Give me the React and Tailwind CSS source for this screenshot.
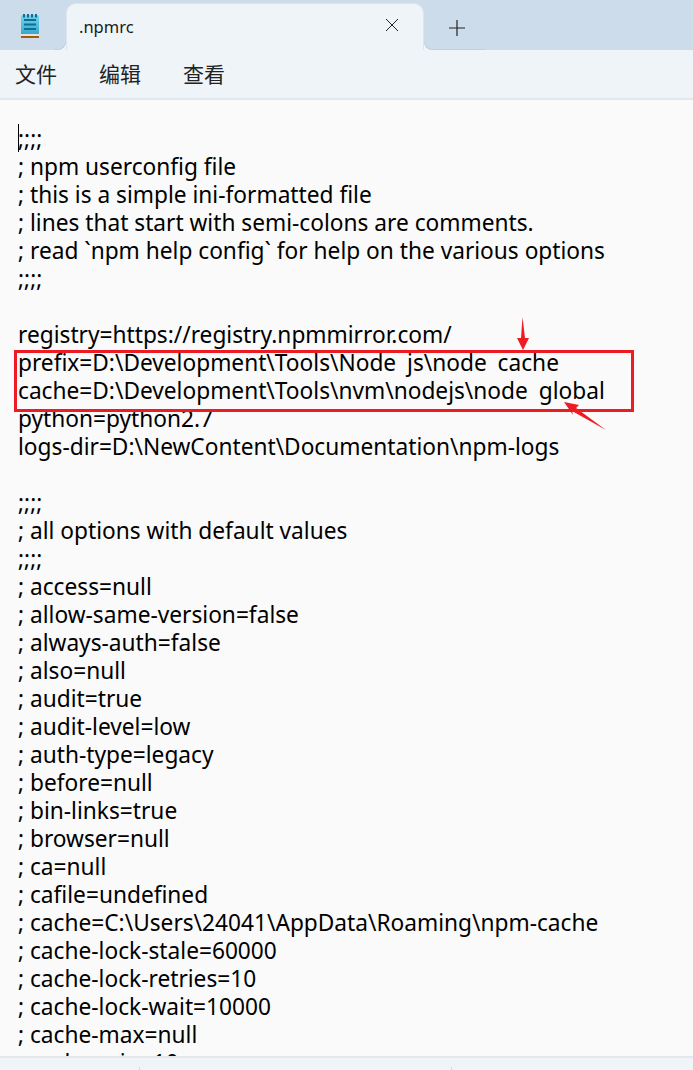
const LINES = [
  ";;;;",
  "; npm userconfig file",
  "; this is a simple ini-formatted file",
  "; lines that start with semi-colons are comments.",
  "; read `npm help config` for help on the various options",
  ";;;;",
  "",
  "registry=https://registry.npmmirror.com/",
  "prefix=D:\\Development\\Tools\\Node js\\node cache",
  "cache=D:\\Development\\Tools\\nvm\\nodejs\\node global",
  "python=python2.7",
  "logs-dir=D:\\NewContent\\Documentation\\npm-logs",
  "",
  ";;;;",
  "; all options with default values",
  ";;;;",
  "; access=null",
  "; allow-same-version=false",
  "; always-auth=false",
  "; also=null",
  "; audit=true",
  "; audit-level=low",
  "; auth-type=legacy",
  "; before=null",
  "; bin-links=true",
  "; browser=null",
  "; ca=null",
  "; cafile=undefined",
  "; cache=C:\\Users\\24041\\AppData\\Roaming\\npm-cache",
  "; cache-lock-stale=60000",
  "; cache-lock-retries=10",
  "; cache-lock-wait=10000",
  "; cache-max=null",
  "; cache-min=10",
];

export default function App() {
  return (
    <div className="relative flex h-[1070px] w-[693px] flex-col overflow-hidden bg-[#fafafa] font-['Noto_Sans','Noto_Sans_CJK_SC',sans-serif] text-[#111]">
      <div className="relative flex h-[50px] shrink-0 items-end bg-[#cddcea]">
        <div className="absolute bottom-0 left-[54px] h-px w-[6px] bg-[#c0d0de]" />
        <div className="absolute bottom-0 left-[430px] h-px w-[55px] bg-[#c0d0de]" />
        <div className="flex h-[50px] w-[66px] items-start pl-[21px] pt-[14px]">
          <svg width="18" height="24" viewBox="0 0 18 24">
            <defs>
              <linearGradient id="nb" x1="0" y1="0" x2="0" y2="1">
                <stop offset="0" stopColor="#74d3ee" />
                <stop offset="1" stopColor="#38a8cf" />
              </linearGradient>
            </defs>
            <path d="M0 3a2 2 0 0 1 2-2h14a2 2 0 0 1 2 2v17H0z" fill="url(#nb)" />
            <path d="M3 0v3.5M7 0v3.5M11 0v3.5M15 0v3.5" stroke="#0f6f92" strokeWidth="2" />
            <path d="M3 6h12M3 10.5h12M3 15h12" stroke="#0f6f92" strokeWidth="2" />
            <rect x="0" y="20" width="18" height="2" fill="#e6e2dc" />
            <rect x="0" y="22" width="18" height="2" fill="#a9560f" />
          </svg>
        </div>
        <div className="relative flex h-[47px] w-[358px] items-center rounded-t-[10px] border-x border-t border-[#dce6ef] bg-[#eff4f9] pl-[12px] pr-[24px]">
          <div className="absolute bottom-0 left-[-9px] h-[8px] w-[8px] bg-[#eff4f9]">
            <div className="h-full w-full rounded-br-[8px] border-b border-r border-[#c0d0de] bg-[#cddcea]" />
          </div>
          <div className="absolute bottom-0 right-[-9px] h-[8px] w-[8px] bg-[#eff4f9]">
            <div className="h-full w-full rounded-bl-[8px] border-b border-l border-[#c0d0de] bg-[#cddcea]" />
          </div>
          <span className="text-[16.5px] text-[#1a1a1a]">.npmrc</span>
          <svg className="ml-auto mt-[-4px]" width="14" height="14" viewBox="0 0 14 14">
            <path d="M1 1l12 12M13 1L1 13" stroke="#222" strokeWidth="1" />
          </svg>
        </div>
        <div className="flex h-[50px] flex-1 items-center pl-[25px]">
          <svg width="16" height="16" viewBox="0 0 16 16" className="mt-[5px]">
            <path d="M8 0v16M0 8h16" stroke="#222" strokeWidth="1.2" />
          </svg>
        </div>
      </div>

      <div className="flex h-[50px] shrink-0 items-center gap-[42px] border-b-2 border-[#e4e8ec] bg-[#eff4f9] pl-[15px] pt-[2px] text-[21px] text-[#222]">
        <span>文件</span>
        <span>编辑</span>
        <span>查看</span>
      </div>

      <div className="relative min-h-0 flex-1 overflow-hidden pl-[18px] pt-[25px] text-[22.7px] leading-[28px] text-black">
        <div className="absolute left-[18px] top-[24px] h-[28px] w-px bg-black" />
        {LINES.map((line, i) => (
          <div key={i} className={i === 8 || i === 9 ? "h-[28px] whitespace-pre [word-spacing:5px]" : "h-[28px] whitespace-pre"}>
            {line}
          </div>
        ))}
      </div>

      <div className="flex h-[14px] shrink-0 items-end border-t-2 border-[#e4e8ec] bg-[#eff4f9]">
        <div className="ml-[139px] h-[3px] w-px bg-[#d8dde2]" />
        <div className="ml-[311px] h-[3px] w-px bg-[#d8dde2]" />
      </div>

      <div className="pointer-events-none absolute left-[14px] top-[350px] h-[62px] w-[620px] border-[3px] border-[#ed1c24]" />
      <svg className="pointer-events-none absolute left-0 top-0" width="693" height="1070">
        <polygon points="522.5,317 525,338 529,338 523,350 517,338 521,338" fill="#ed1c24" />
        <polygon points="564,402 579,405 576,408 606,430 572,411 573,415" fill="#ed1c24" />
      </svg>
    </div>
  );
}
